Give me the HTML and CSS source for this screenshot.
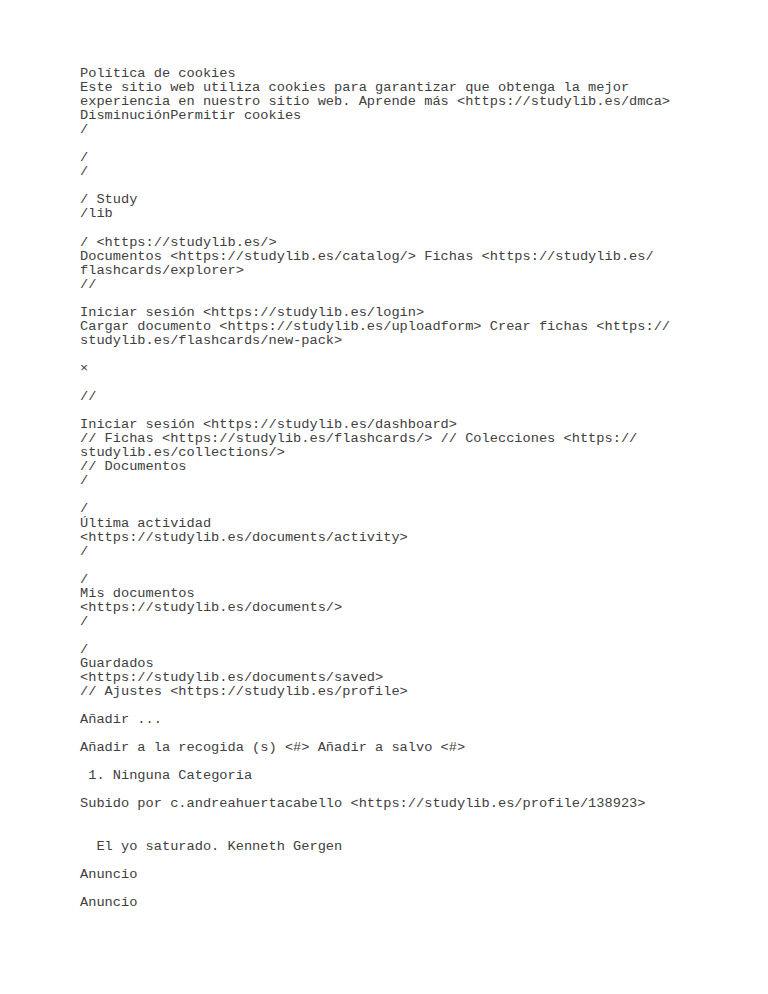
FILE: index.html
```html
<!DOCTYPE html>
<html lang="es">
<head>
<meta charset="utf-8">
<title>El yo saturado. Kenneth Gergen</title>
<link rel="stylesheet" href="styles.css">
</head>
<body>
<pre class="doc">Política de cookies
Este sitio web utiliza cookies para garantizar que obtenga la mejor experiencia en nuestro sitio web. Aprende más &lt;https://studylib.es/dmca&gt;
DisminuciónPermitir cookies
/

/
/

/ Study
/lib

/ &lt;https://studylib.es/&gt;
Documentos &lt;https://studylib.es/catalog/&gt; Fichas &lt;https://<wbr>studylib.es/<wbr>flashcards/<wbr>explorer&gt;
//

Iniciar sesión &lt;https://studylib.es/login&gt;
Cargar documento &lt;https://studylib.es/uploadform&gt; Crear fichas &lt;https://<wbr>studylib.es/<wbr>flashcards/<wbr>new-pack&gt;

×

//

Iniciar sesión &lt;https://studylib.es/dashboard&gt;
// Fichas &lt;https://studylib.es/flashcards/&gt; // Colecciones &lt;https://<wbr>studylib.es/<wbr>collections/&gt;
// Documentos
/

/
Última actividad
&lt;https://studylib.es/documents/activity&gt;
/

/
Mis documentos
&lt;https://studylib.es/documents/&gt;
/

/
Guardados
&lt;https://studylib.es/documents/saved&gt;
// Ajustes &lt;https://studylib.es/profile&gt;

Añadir ...

Añadir a la recogida (s) &lt;#&gt; Añadir a salvo &lt;#&gt;

 1. Ninguna Categoria

Subido por c.andreahuertacabello &lt;https://studylib.es/profile/138923&gt;


  El yo saturado. Kenneth Gergen

Anuncio

Anuncio
</pre>
</body>
</html>
```
FILE: styles.css
```css
html, body {
  margin: 0;
  padding: 0;
  background: #ffffff;
}
body {
  padding: 67px 80px 40px 80px;
}
.doc {
  margin: 0;
  font-family: "Liberation Mono", "Courier New", monospace;
  font-size: 13.67px;
  line-height: 14.04px;
  color: #404040;
  white-space: pre-wrap;
  word-wrap: break-word;
}
```
